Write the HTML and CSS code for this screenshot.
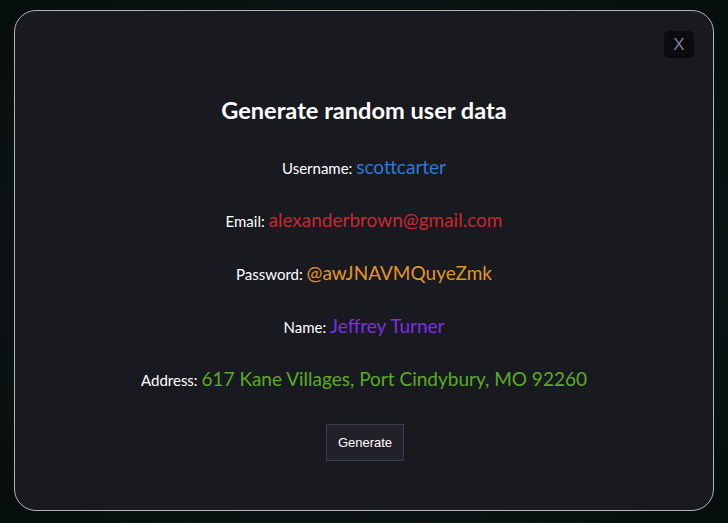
FILE: index.html
```html
<!DOCTYPE html>
<html>
<head>
<meta charset="utf-8">
<link rel="stylesheet" href="styles.css">
</head>
<body>
<div class="modal">
  <button class="close">X</button>
  <div class="content">
    <h1 class="title">Generate random user data</h1>
    <p class="row"><span class="label">Username:</span> <span class="val user">scottcarter</span></p>
    <p class="row"><span class="label">Email:</span> <span class="val email">alexanderbrown@gmail.com</span></p>
    <p class="row"><span class="label">Password:</span> <span class="val pass">@awJNAVMQuyeZmk</span></p>
    <p class="row"><span class="label">Name:</span> <span class="val name">Jeffrey Turner</span></p>
    <p class="row"><span class="label">Address:</span> <span class="val addr">617 Kane Villages, Port Cindybury, MO 92260</span></p>
    <button class="gen">Generate</button>
  </div>
</div>
</body>
</html>
```
FILE: styles.css
```css
html, body {
  margin: 0;
  height: 100%;
}
body {
  background: radial-gradient(ellipse at 50% 50%, #14201f 0%, #0b1414 60%, #060d0d 100%);
  font-family: Lato, "Open Sans", sans-serif;
  display: flex;
  justify-content: center;
  padding-top: 10px;
  box-sizing: border-box;
}
.modal {
  position: relative;
  width: 700px;
  height: 501px;
  box-sizing: border-box;
  background: #191920;
  border: 1px solid #b4b4b8;
  border-radius: 22px;
}
.close {
  position: absolute;
  top: 20px;
  right: 19px;
  width: 30px;
  height: 27px;
  background: #0b0b0e;
  color: #7c82a0;
  border: none;
  border-radius: 5px;
  font-family: "Liberation Sans", Arial, sans-serif;
  font-size: 17px;
  padding: 0;
}
.content {
  display: flex;
  flex-direction: column;
  align-items: center;
  padding-top: 84px;
}
.title {
  margin: 0 0 30px;
  font-size: 23.6px;
  line-height: 30px;
  font-weight: 700;
  color: #ffffff;
}
.row {
  margin: 0 0 30px;
  height: 23px;
  line-height: 23px;
  color: #ffffff;
  font-size: 15px;
}
.row:last-of-type {
  margin-bottom: 34px;
}
.val {
  font-size: 19px;
}
.user { color: #2b7bd8; }
.email { color: #c9282f; }
.pass { color: #e29527; }
.name { color: #7f2fe3; }
.addr { color: #5bab25; }
.gen {
  width: 78px;
  height: 37px;
  margin-left: 2px;
  background: #22212a;
  border: 1px solid #3d3c48;
  color: #ffffff;
  font-family: "Liberation Sans", Arial, sans-serif;
  font-size: 13px;
  padding: 0;
}
```
